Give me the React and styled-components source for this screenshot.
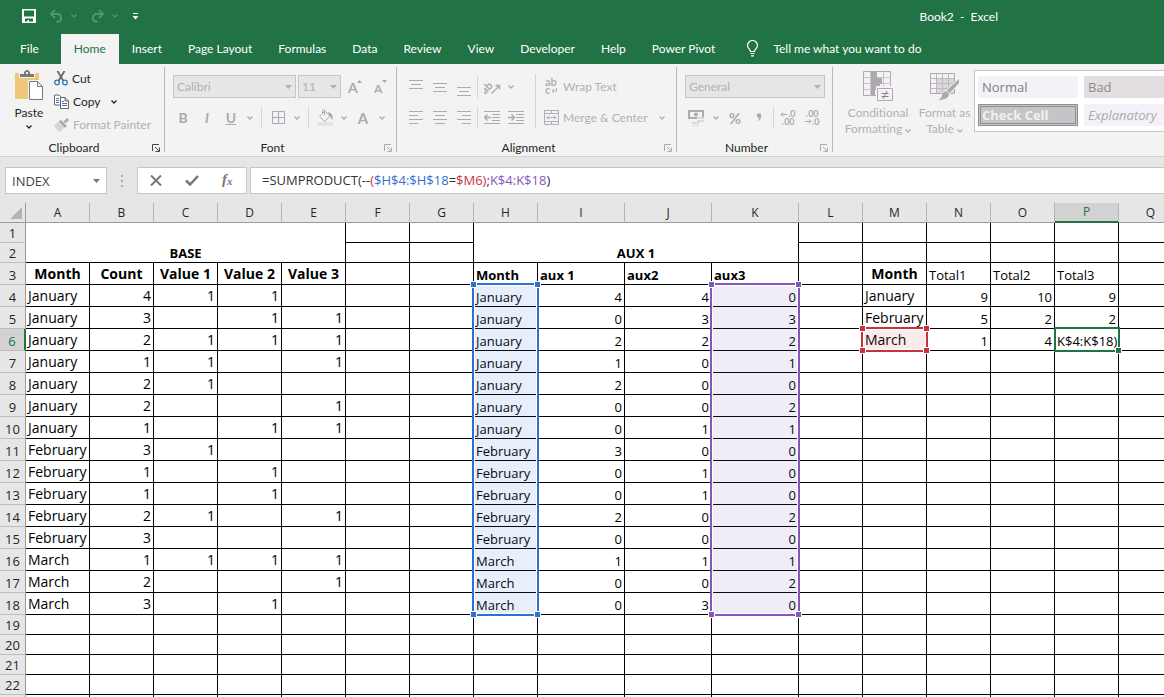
import React from 'react'
import styled, { createGlobalStyle, css } from 'styled-components'

const uiFont = "'Lato', 'Open Sans', sans-serif"
const cellFont = "'Open Sans', 'Noto Sans', sans-serif"

const GlobalStyle = createGlobalStyle`
  * {
    box-sizing: border-box;
  }

  body {
    margin: 0;
    overflow: hidden;
    font-family: ${uiFont};
    font-size: 12px;
    font-variant-ligatures: none;
    color: #262626;
  }

  button, input, select {
    font: inherit;
    color: inherit;
    margin: 0;
  }
`

const Window = styled.div`
  display: flex;
  flex-direction: column;
  height: 100vh;
  background: #e6e6e6;
`

/* title bar and tabs */

const TitleBar = styled.header`
  display: flex;
  align-items: center;
  justify-content: space-between;
  height: 34px;
  padding: 0 166px 2px 22px;
  background: #217346;
  color: #fff;
`

const QuickAccess = styled.div`
  display: flex;
  align-items: center;
  gap: 13px;
`

const Title = styled.span`
  white-space: pre;
`

const IconButton = styled.button`
  display: flex;
  align-items: center;
  justify-content: center;
  gap: 7px;
  flex: none;
  width: ${props => props.$width || 24}px;
  height: 24px;
  padding: 0;
  border: none;
  background: none;
  color: ${props => props.$color || '#ababab'};
`

const Tabs = styled.nav`
  display: flex;
  align-items: stretch;
  height: 30px;
  padding-left: 6px;
  background: #217346;
  color: #fff;
`

const Tab = styled.button`
  display: flex;
  align-items: center;
  padding: 0 13px 2px;
  border: none;
  white-space: nowrap;
  background: ${props => (props.$active ? '#f3f3f3' : 'none')};
  color: ${props => (props.$active ? '#217346' : '#fff')};

  &:first-child {
    padding: 0 22px 2px 14px;
  }
`

const TellMe = styled(Tab)`
  gap: 14px;
  padding-left: 18px;
`

/* ribbon */

const Ribbon = styled.div`
  display: flex;
  flex: none;
  height: 93px;
  padding-top: 3px;
  overflow: hidden;
  background: #f3f3f3;
  border-bottom: 1px solid #d2d2d2;
`

const Group = styled.section`
  display: flex;
  flex-direction: column;
  justify-content: space-between;
  flex: ${props => (props.$width ? `0 0 ${props.$width}px` : '1 0 auto')};
  height: 85px;
  border-right: ${props => (props.$width ? '1px solid #b9b9b9' : 'none')};
`

const GroupFoot = styled.div`
  display: flex;
  align-items: center;
  height: 16px;
  margin-bottom: -4px;
`

const GroupLabel = styled.h2`
  flex: 1;
  margin: 0;
  padding-bottom: 1px;
  font-size: 12px;
  font-weight: 400;
  text-align: center;
`

const Launcher = styled.button`
  display: flex;
  width: 16px;
  padding: 0 4px;
  border: none;
  background: none;
  color: ${props => (props.$active ? '#444' : '#ababab')};
`

const Clipboard = styled.div`
  display: grid;
  grid-template-columns: 38px 1fr;
  padding-left: 10px;
`

const BigButton = styled.button`
  display: flex;
  flex-direction: column;
  align-items: center;
  gap: 4px;
  padding: 3px 0 0;
  border: none;
  background: none;
  line-height: 16px;
  color: ${props => (props.disabled ? '#b1b1b1' : '#262626')};
`

const Stack = styled.div`
  display: flex;
  flex-direction: column;
`

const TextButton = styled.button`
  display: flex;
  align-items: center;
  gap: 4px;
  height: 23px;
  padding: 0 0 0 6px;
  border: none;
  background: none;
  white-space: nowrap;
  color: ${props => (props.disabled ? '#b1b1b1' : '#262626')};

  svg:nth-of-type(2) {
    margin-left: 7px;
  }
`

const Rows = styled.div`
  display: flex;
  flex-direction: column;
  gap: 6px;
  padding: 7px 0 0 ${props => props.$pad || 6}px;
`

const Row = styled.div`
  display: flex;
  align-items: center;
  height: 25px;
`

const Rule = styled.span`
  flex: none;
  width: 1px;
  height: ${props => props.$height || 22}px;
  margin: 0 ${props => props.$gap || 4}px;
  background: #d5d5d5;
`

const SelectWrap = styled.div`
  display: grid;
  align-items: center;
  flex: none;
  width: ${props => props.$width}px;
  height: 23px;
  margin-left: 2px;
  border: 1px solid #c6c6c6;
  background: #e6e6e6;

  select,
  svg {
    grid-area: 1 / 1;
  }

  select {
    width: 100%;
    height: 100%;
    padding: 0 3px;
    border: none;
    background: none;
    appearance: none;
    opacity: 1;
    color: #b1b1b1;
  }

  svg {
    justify-self: end;
    margin-right: 3px;
    color: #b1b1b1;
    pointer-events: none;
  }
`

const Alignment = styled.div`
  display: flex;
`

const Styles = styled.div`
  display: flex;
  align-items: flex-start;
  padding-left: 8px;
`

const StyleButton = styled(BigButton)`
  flex: none;
  width: ${props => props.$width}px;
  gap: 3px;
  padding-top: 4px;
  white-space: nowrap;
`

const Gallery = styled.div`
  display: grid;
  grid-template-columns: repeat(2, 100px);
  grid-auto-rows: 22px;
  gap: 6px;
  flex: none;
  margin-top: 3px;
  padding: 5px 3px;
  border: 1px solid #c6c6c6;
  background: #fff;
`

const Swatch = styled.button`
  padding: 0 4px;
  border: none;
  text-align: left;
  font-family: ${cellFont};
  font-size: 13px;
  line-height: 18px;
  white-space: nowrap;
  background: #f5f1f8;
  color: #808080;

  ${props => props.$kind === 'bad' && css`
    background: #e2dee2;
    color: #8c8c8c;
  `}

  ${props => props.$kind === 'check' && css`
    padding: 0 1px;
    border: 3px double #8e918e;
    line-height: 14px;
    font-weight: 700;
    background: #c6c4c8;
    color: #f0f0f0;
  `}

  ${props => props.$kind === 'note' && css`
    font-style: italic;
    color: #a9a9a9;
  `}
`

/* formula bar */

const FormulaBar = styled.div`
  display: flex;
  flex: none;
  height: 46px;
  padding: 10px 0 9px 5px;
  font-family: ${cellFont};
  font-size: 13px;
`

const NameBox = styled.div`
  display: flex;
  align-items: center;
  width: 102px;
  border: 1px solid #c6c6c6;
  background: #fff;

  input {
    flex: 1;
    min-width: 0;
    padding: 0 0 0 6px;
    border: none;
    color: #444;
  }
`

const Dots = styled.div`
  display: flex;
  align-items: center;
  justify-content: center;
  width: 30px;
`

const FormulaButtons = styled.div`
  display: flex;
  align-items: center;
  justify-content: space-around;
  width: 110px;
  margin-right: 3px;
  border: 1px solid #c6c6c6;
  background: #fff;
`

const FormulaInput = styled.div`
  flex: 1;
  padding-left: 11px;
  border: 1px solid #c6c6c6;
  border-right: none;
  background: #fff;
  line-height: 25px;
  white-space: nowrap;
  color: #333;
  outline: none;
`

const Ref = styled.span`
  color: ${props => props.$color};
`

/* sheet */

const SheetArea = styled.main`
  flex: 1;
  min-height: 0;
  overflow: hidden;
`

const Sheet = styled.table`
  table-layout: fixed;
  width: 1183px;
  border-collapse: separate;
  border-spacing: 0;
  background: #fff;
  font-family: ${cellFont};
  font-size: 13px;
  line-height: 18px;
  color: #000;
`

const SheetRow = styled.tr`
  height: ${props => props.$height}px;
`

const ColHead = styled.th`
  height: 20px;
  padding: 0;
  border-right: 1px solid #b4b4b4;
  border-bottom: ${props => (props.$active ? '2px solid #217346' : '1px solid #9b9b9b')};
  background: ${props => (props.$active ? '#d2d2d2' : '#e6e6e6')};
  color: ${props => (props.$active ? '#217346' : '#262626')};
  font-size: 12px;
  font-weight: 400;
  line-height: 18px;
`

const Corner = styled(ColHead)`
  border-right-color: #9b9b9b;
  line-height: 0;
  vertical-align: bottom;

  svg {
    float: right;
    margin: 0 3px 3px 0;
  }
`

const RowHead = styled.th`
  padding: 0;
  border-right: ${props => (props.$active ? '2px solid #217346' : '1px solid #9b9b9b')};
  border-bottom: 1px solid #bdbdbd;
  background: ${props => (props.$active ? '#d2d2d2' : '#e6e6e6')};
  color: ${props => (props.$active ? '#217346' : '#262626')};
  font-weight: 400;
  vertical-align: bottom;
`

const Cell = styled.td`
  position: ${props => (props.$anchor ? 'relative' : 'static')};
  padding: 0 2px;
  border-right: 1px solid #000;
  border-bottom: 1px solid #000;
  vertical-align: bottom;
  white-space: nowrap;
  text-align: ${props => props.$align || 'left'};
  font-weight: ${props => (props.$bold ? 700 : 400)};

  ${props => props.$large && css`
    font-size: 14px;
    line-height: 20px;
  `}
`

const RangeBox = styled.div`
  position: absolute;
  z-index: 1;
  top: -2px;
  left: -2px;
  right: -2px;
  height: ${props => props.$rows * 22 + 3}px;
  border: 2px solid ${props => props.$color};
  box-shadow: inset 0 0 0 1px #fff;
  background: ${props => props.$fill};
  pointer-events: none;
`

const Handle = styled.i`
  position: absolute;
  width: 7px;
  height: 7px;
  border: 1px solid #fff;
  background: ${props => props.$color};
  ${props => props.$v}: -4px;
  ${props => props.$h}: -4px;
`

const ActiveBox = styled(RangeBox)`
  left: -1px;
  box-shadow: none;
`

const Icon = ({ w, h, children, ...rest }) => (
  <svg width={w} height={h} viewBox={`0 0 ${w} ${h}`} fill="none" stroke="currentColor" aria-hidden="true" {...rest}>
    {children}
  </svg>
)

const Chevron = () => (
  <Icon w={6} h={4} strokeWidth="1.3"><path d="M.5 .5 3 3 5.500 .5" /></Icon>
)

const Triangle = () => (
  <Icon w={7} h={4}><path d="M0 0h7L3.500 4z" fill="currentColor" stroke="none" /></Icon>
)

const Lines = ({ rows, y = 0 }) => (
  <Icon w={16} h={20}>
    {rows.map(([x, len], i) => (
      <path key={i} d={`M${x} ${y + i * 4 + 0.5}h${len}`} />
    ))}
  </Icon>
)

const SaveIcon = () => (
  <Icon w={14} h={14} stroke="none">
    <path fill="#fff" fillRule="evenodd" d="M0 0h14v14H0zM2 1.500v6h10v-6zM3 9.500v3h2.500V11H7v1.500h4v-3z" />
  </Icon>
)

const UndoIcon = ({ flip }) => (
  <Icon w={15} h={14} strokeWidth="2" transform={flip ? 'scale(-1 1)' : undefined}>
    <path d="M6 1 2 5l4 4M2.500 5H9a4 4 0 0 1 0 7.800H7.500" />
  </Icon>
)

const CustomizeIcon = () => (
  <Icon w={7} h={8}><path d="M1 1.500h5" /><path d="M.5 4h6l-3 3.500z" fill="currentColor" stroke="none" /></Icon>
)

const BulbIcon = () => (
  <Icon w={13} h={17} strokeWidth="1.2">
    <path d="M4.500 11.500c0-2.500-3-3-3-6a5 5 0 0 1 10 0c0 3-3 3.500-3 6zM4.500 13.500h4M5 15.800h3" />
  </Icon>
)

const PasteIcon = () => (
  <Icon w={28} h={31} stroke="none">
    <path fill="#eec77b" d="M0 3h24v26H0z" />
    <path fill="#f3f3f3" d="M4 3h16v5H4zM13 10h15v21H13z" />
    <path fill="#787878" fillRule="evenodd" d="M5 7V4h4V2l2-2h2l2 2v2h4v3zM11 2v2h2V2z" />
    <path fill="#fff" stroke="#787878" d="M14.500 11.500h8l5 5v13h-13zM22.500 11.500v5h5" />
  </Icon>
)

const CutIcon = () => (
  <Icon w={14} h={15}>
    <path stroke="#666" strokeWidth="1.800" d="M3.500 0 9.500 10M10.500 0l-6 10" />
    <circle cx="3" cy="11.500" r="2.300" stroke="#3d76b5" strokeWidth="1.300" />
    <circle cx="11" cy="11.500" r="2.300" stroke="#3d76b5" strokeWidth="1.300" />
  </Icon>
)

const CopyIcon = () => (
  <Icon w={15} h={15} stroke="#666">
    <path fill="#fff" d="M.5 1h4.500l2.500 2.500V11h-7z" />
    <path stroke="#3d76b5" d="M2 4.500h3M2 6.500h3M2 8.500h3" />
    <path fill="#fff" d="M6.500 3.500H11l3.500 3.500v7.500h-8zM11 3.500V7h3.500" />
    <path stroke="#3d76b5" d="M8 7.500h2M8 9.500h5M8 11.500h5" />
  </Icon>
)

const PainterIcon = () => (
  <Icon w={15} h={14} stroke="none">
    <path fill="#d9d3d9" d="M0 7l4-3 6 6-4 4C3 12 1 10 0 7z" />
    <path fill="#ababab" d="M4.500 3.500 7 2l6 6-2.500 2zM9.500 3.500 13 0l2 2-3.500 3.500z" />
  </Icon>
)

const LauncherIcon = () => (
  <Icon w={8} h={8}><path d="M.5 7V.5H7M3 3l4 4M7.500 3.500v4h-4" /></Icon>
)

const BordersIcon = () => (
  <Icon w={13} h={13}><path fill="#f6f1f8" d="M.5 .5h12v12H.5zM6.500 .5v12M.5 6.500h12" /></Icon>
)

const FillIcon = () => (
  <Icon w={17} h={17}>
    <path fill="#e6e1e6" stroke="none" d="M0 13h16v4H0z" />
    <path d="M2.500 7.500 8 2l5 5-5.500 5.500zM5.500 5V1.500a1 1 0 0 1 2 0V6" />
    <path fill="currentColor" stroke="none" d="M11 3c4 1 5 3 4.500 8C14 10 14 8 12 6z" />
  </Icon>
)

const GrowFontIcon = ({ shrink }) => (
  <Icon w={14} h={16} stroke="none">
    <text x="0" y="14" fontSize={shrink ? 12 : 14} fontWeight="700" fill="currentColor">A</text>
    <path fill="currentColor" d={shrink ? 'M8 1h5l-2.500 3z' : 'M9 4h5l-2.500-3z'} />
  </Icon>
)

const AngleIcon = () => (
  <Icon w={17} h={16}>
    <text x="-2" y="12" fontSize="11" fontWeight="700" fill="currentColor" stroke="none" transform="rotate(-45 4 10)">ab</text>
    <path strokeWidth="1.300" d="M7.500 14.500 15 7M11.500 6.500H15.500V10.500" />
  </Icon>
)

const IndentIcon = ({ right }) => (
  <Icon w={16} h={14}>
    <path d="M0 .5h16M8 3.500h8M8 6.500h8M8 9.500h8M0 12.500h16" />
    <path strokeWidth="1.500" d={right ? 'M0 6.500h6M3.500 3.500l3 3-3 3' : 'M7 6.500H1M3.500 3.500l-3 3 3 3'} />
  </Icon>
)

const WrapIcon = () => (
  <Icon w={15} h={17} stroke="none">
    <text x="1" y="8" fontSize="11" fontWeight="700" fill="currentColor">ab</text>
    <text x="1" y="16" fontSize="11" fontWeight="700" fill="currentColor">c</text>
    <path stroke="currentColor" d="M12.500 10v3H8M10 11l-2 2 2 2" />
  </Icon>
)

const MergeIcon = () => (
  <Icon w={15} h={15}>
    <path fill="#f6f1f8" d="M.5 .5h14v14H.5zM.5 3.500h14M.5 11.500h14M7.500 .5v3M7.500 11.500v3M3 7.500h9M5 5.500l-2 2 2 2M10 5.500l2 2-2 2" />
  </Icon>
)

const MoneyIcon = () => (
  <Icon w={17} h={16} stroke="none">
    <path fill="#ababab" fillRule="evenodd" d="M0 0h16v9H0zM2 2v5h12V2z" />
    <circle cx="8" cy="4.500" r="2" fill="#ababab" />
    <path fill="#ddd6dd" d="M9 7h7v2H9zM9 10h7v2H9zM4 12h7v2H4zM5 15h6v1H5z" />
  </Icon>
)

const CommaIcon = () => (
  <Icon w={6} h={9} stroke="none">
    <circle cx="3" cy="2.500" r="2.300" fill="currentColor" />
    <path fill="currentColor" d="M5.300 2.500C5.300 5.500 4 7.500 1 8.500 2.500 7 3 6 3 4z" />
  </Icon>
)

const DecimalIcon = ({ less }) => (
  <Icon w={16} h={16} stroke="none">
    <text x={less ? 2 : 8} y="7" fontSize="9" fontWeight="700" fill="currentColor">{less ? '.00' : '.0'}</text>
    <text x={less ? 8 : 2} y="15" fontSize="9" fontWeight="700" fill="currentColor">{less ? '.0' : '.00'}</text>
    <path stroke="currentColor" d={less ? 'M1 11.500h6M5 9.500l2 2-2 2' : 'M7 4.500H1M3 2.500l-2 2 2 2'} />
  </Icon>
)

const ConditionalIcon = () => (
  <Icon w={30} h={31} stroke="#ababab">
    <path fill="#f6f1f8" d="M.5 .5h27v24H.5z" />
    <path stroke="#ccc6cc" d="M7.500 0v25M20.500 0v25M0 6.500h28M0 12.500h28M0 18.500h28" />
    <path fill="#ababab" stroke="none" d="M8 1h6v6h5v6h-2v6h-5v5H8z" />
    <path fill="#f6f1f8" stroke="#f3f3f3" d="M13.500 15.500h16v15h-16z" />
    <path fill="#f6f1f8" d="M14.500 17.500h15v12h-15z" />
    <path stroke="#858585" d="M18.500 22.500h7M18.500 25.500h7M24 20l-4 8" />
  </Icon>
)

const TableIcon = () => (
  <Icon w={30} h={31} stroke="#ababab">
    <path fill="#f6f1f8" d="M.5 2.500h24v20H.5z" />
    <path fill="#ddd6dd" stroke="none" d="M7 8h17v14H7z" />
    <path stroke="#bdb8bd" d="M6.500 2v20M12.500 2v20M18.500 2v20M0 7.500h24M0 12.500h24M0 17.500h24" />
    <path fill="#ababab" stroke="#f3f3f3" d="M29.500 7v5L19.500 23l-3.500-3.500z" />
    <path fill="#ababab" stroke="#f3f3f3" d="M15.500 20c3 0 4.500 2 3.500 5-2 4-8 4.500-12 4.500 3-1 4-3 4.500-5.500.5-2.500 2-4 4-4z" />
  </Icon>
)

const CancelIcon = () => (
  <Icon w={12} h={11} strokeWidth="2"><path d="M1 .5l10 10M11 .5 1 10.500" /></Icon>
)

const EnterIcon = () => (
  <Icon w={14} h={11} strokeWidth="2.500"><path d="M1 5.500 5 9.500 13 1" /></Icon>
)

const FunctionIcon = () => (
  <Icon w={14} h={15} stroke="none">
    <text x="1" y="11" fontFamily="Liberation Serif, serif" fontStyle="italic" fontWeight="700" fontSize="15" fill="currentColor">f</text>
    <text x="6" y="12" fontFamily="Liberation Serif, serif" fontStyle="italic" fontWeight="700" fontSize="11" fill="currentColor">x</text>
  </Icon>
)

const tabs = ['File', 'Home', 'Insert', 'Page Layout', 'Formulas', 'Data', 'Review', 'View', 'Developer', 'Help', 'Power Pivot']

const columns = 'ABCDEFGHIJKLMNOPQ'.split('')
const wideColumns = ['I', 'J', 'K']

// Month, Count, Value 1..3 and the three helper columns
const records = [
  ['January', 4, 1, 1, '', 4, 4, 0],
  ['January', 3, '', 1, 1, 0, 3, 3],
  ['January', 2, 1, 1, 1, 2, 2, 2],
  ['January', 1, 1, '', 1, 1, 0, 1],
  ['January', 2, 1, '', '', 2, 0, 0],
  ['January', 2, '', '', 1, 0, 0, 2],
  ['January', 1, '', 1, 1, 0, 1, 1],
  ['February', 3, 1, '', '', 3, 0, 0],
  ['February', 1, '', 1, '', 0, 1, 0],
  ['February', 1, '', 1, '', 0, 1, 0],
  ['February', 2, 1, '', 1, 2, 0, 2],
  ['February', 3, '', '', '', 0, 0, 0],
  ['March', 1, 1, 1, 1, 1, 1, 1],
  ['March', 2, '', '', 1, 0, 0, 2],
  ['March', 3, '', 1, '', 0, 3, 0],
]

const totals = [
  ['January', 9, 10, 9],
  ['February', 5, 2, 2],
  ['March', 1, 4, 'K$4:K$18)'],
]

const cells = {
  A3: 'Month', B3: 'Count', C3: 'Value 1', D3: 'Value 2', E3: 'Value 3',
  H3: 'Month', I3: 'aux 1', J3: 'aux2', K3: 'aux3',
  M3: 'Month', N3: 'Total1', O3: 'Total2', P3: 'Total3',
}

records.forEach(([month, count, v1, v2, v3, a1, a2, a3], i) => {
  const values = { A: month, B: count, C: v1, D: v2, E: v3, H: month, I: a1, J: a2, K: a3 }
  Object.entries(values).forEach(([col, value]) => {
    cells[col + (i + 4)] = value
  })
})

totals.forEach((row, i) => {
  row.forEach((value, j) => {
    cells['MNOP'[j] + (i + 4)] = value
  })
})

const ranges = {
  H4: { color: '#2f6fcf', fill: 'rgba(47, 111, 207, 0.11)', rows: 15 },
  K4: { color: '#8457bb', fill: 'rgba(132, 87, 187, 0.11)', rows: 15 },
  M6: { color: '#c5343c', fill: 'rgba(197, 52, 60, 0.1)', rows: 1 },
}

const Range = ({ color, fill, rows }) => (
  <RangeBox $color={color} $fill={fill} $rows={rows}>
    <Handle $color={color} $v="top" $h="left" />
    <Handle $color={color} $v="top" $h="right" />
    <Handle $color={color} $v="bottom" $h="left" />
    <Handle $color={color} $v="bottom" $h="right" />
  </RangeBox>
)

const SheetCell = ({ col, row }) => {
  const id = col + row
  const value = cells[id]
  const large = 'ABCDEM'.includes(col) && row > 2 && row < 19
  const heading = row === 3
  const active = id === 'P6'
  let align = typeof value === 'number' ? 'right' : 'left'
  if (heading && large) align = 'center'

  return (
    <Cell
      $large={large}
      $align={align}
      $bold={heading && !'NOP'.includes(col)}
      $anchor={active || Boolean(ranges[id])}
    >
      {value}
      {ranges[id] && <Range {...ranges[id]} />}
      {active && (
        <ActiveBox $color="#217346" $fill="none" $rows={1}>
          <Handle $color="#217346" $v="bottom" $h="right" />
        </ActiveBox>
      )}
    </Cell>
  )
}

const renderCells = row => {
  if (row === 1) {
    return (
      <>
        <Cell colSpan={5} rowSpan={2} $align="center" $bold>BASE</Cell>
        <Cell /><Cell />
        <Cell colSpan={4} rowSpan={2} $align="center" $bold>AUX 1</Cell>
        {columns.slice(11).map(col => <Cell key={col} />)}
      </>
    )
  }
  const visible = row === 2 ? columns.filter(col => !'ABCDEHIJK'.includes(col)) : columns
  return visible.map(col => <SheetCell key={col} col={col} row={row} />)
}

const Foot = ({ label, active }) => (
  <GroupFoot>
    <GroupLabel>{label}</GroupLabel>
    <Launcher $active={active} aria-label={`${label} settings`}><LauncherIcon /></Launcher>
  </GroupFoot>
)

const ChevronButton = ({ label, width = 14 }) => (
  <IconButton disabled $width={width} aria-label={label}><Chevron /></IconButton>
)

const Glyph = styled.span`
  font-size: ${props => props.$size || 14}px;
  font-weight: 700;
  font-style: ${props => (props.$italic ? 'italic' : 'normal')};
  text-decoration: ${props => (props.$underline ? 'underline' : 'none')};
`

const App = () => (
  <Window>
    <GlobalStyle />
    <TitleBar>
      <QuickAccess>
        <IconButton $width={14} aria-label="Save"><SaveIcon /></IconButton>
        <IconButton $width={28} $color="#4f9570" aria-label="Undo"><UndoIcon /><Chevron /></IconButton>
        <IconButton $width={28} $color="#4f9570" aria-label="Redo"><UndoIcon flip /><Chevron /></IconButton>
        <IconButton $width={8} $color="#fff" aria-label="Customize toolbar"><CustomizeIcon /></IconButton>
      </QuickAccess>
      <Title>Book2  -  Excel</Title>
    </TitleBar>
    <Tabs>
      {tabs.map(tab => <Tab key={tab} $active={tab === 'Home'}>{tab}</Tab>)}
      <TellMe><BulbIcon /> Tell me what you want to do</TellMe>
    </Tabs>

    <Ribbon>
      <Group $width={165}>
        <Clipboard>
          <BigButton><PasteIcon />Paste<Chevron /></BigButton>
          <Stack>
            <TextButton><CutIcon />Cut</TextButton>
            <TextButton><CopyIcon />Copy<Chevron /></TextButton>
            <TextButton disabled><PainterIcon />Format Painter</TextButton>
          </Stack>
        </Clipboard>
        <Foot label="Clipboard" active />
      </Group>

      <Group $width={232}>
        <Rows>
          <Row>
            <SelectWrap $width={123}>
              <select disabled aria-label="Font"><option>Calibri</option></select>
              <Triangle />
            </SelectWrap>
            <SelectWrap $width={43}>
              <select disabled aria-label="Font size"><option>11</option></select>
              <Triangle />
            </SelectWrap>
            <IconButton disabled $width={28} aria-label="Increase font size"><GrowFontIcon /></IconButton>
            <IconButton disabled aria-label="Decrease font size"><GrowFontIcon shrink /></IconButton>
          </Row>
          <Row>
            <IconButton disabled aria-label="Bold"><Glyph>B</Glyph></IconButton>
            <IconButton disabled aria-label="Italic"><Glyph $italic>I</Glyph></IconButton>
            <IconButton disabled aria-label="Underline"><Glyph $underline>U</Glyph></IconButton>
            <ChevronButton label="Underline options" />
            <Rule />
            <IconButton disabled aria-label="Borders"><BordersIcon /></IconButton>
            <ChevronButton label="Border options" />
            <Rule />
            <IconButton disabled aria-label="Fill color"><FillIcon /></IconButton>
            <ChevronButton label="Fill color options" />
            <IconButton disabled aria-label="Font color"><Glyph $size={15}>A</Glyph></IconButton>
            <ChevronButton label="Font color options" />
          </Row>
        </Rows>
        <Foot label="Font" />
      </Group>

      <Group $width={280}>
        <Alignment>
          <Rows>
            <Row>
              <IconButton disabled aria-label="Top align"><Lines y={3} rows={[[2, 14], [4, 10], [2, 14]]} /></IconButton>
              <IconButton disabled aria-label="Middle align"><Lines y={6} rows={[[2, 14], [4, 10], [2, 14]]} /></IconButton>
              <IconButton disabled aria-label="Bottom align"><Lines y={10} rows={[[2, 14], [4, 10], [2, 14]]} /></IconButton>
              <Rule $gap={2} />
              <IconButton disabled aria-label="Orientation"><AngleIcon /></IconButton>
              <ChevronButton label="Orientation options" />
            </Row>
            <Row>
              <IconButton disabled aria-label="Align left"><Lines y={3} rows={[[2, 14], [2, 9], [2, 14], [2, 9]]} /></IconButton>
              <IconButton disabled aria-label="Center"><Lines y={3} rows={[[2, 14], [4, 10], [2, 14], [4, 10]]} /></IconButton>
              <IconButton disabled aria-label="Align right"><Lines y={3} rows={[[2, 14], [7, 9], [2, 14], [7, 9]]} /></IconButton>
              <Rule $gap={2} />
              <IconButton disabled aria-label="Decrease indent"><IndentIcon /></IconButton>
              <IconButton disabled aria-label="Increase indent"><IndentIcon right /></IconButton>
            </Row>
          </Rows>
          <Rows>
            <Rule $height={54} $gap={1} />
          </Rows>
          <Rows $pad={1}>
            <Row><TextButton disabled><WrapIcon />Wrap Text</TextButton></Row>
            <Row><TextButton disabled><MergeIcon />Merge &amp; Center<Chevron /></TextButton></Row>
          </Rows>
        </Alignment>
        <Foot label="Alignment" />
      </Group>

      <Group $width={156}>
        <Rows>
          <Row>
            <SelectWrap $width={140}>
              <select disabled aria-label="Number format"><option>General</option></select>
              <Triangle />
            </SelectWrap>
          </Row>
          <Row>
            <IconButton disabled $width={26} aria-label="Accounting format"><MoneyIcon /></IconButton>
            <ChevronButton label="Accounting options" />
            <IconButton disabled aria-label="Percent style"><Glyph $size={15}>%</Glyph></IconButton>
            <IconButton disabled aria-label="Comma style"><CommaIcon /></IconButton>
            <Rule $gap={2} />
            <IconButton disabled aria-label="Increase decimal"><DecimalIcon /></IconButton>
            <IconButton disabled aria-label="Decrease decimal"><DecimalIcon less /></IconButton>
          </Row>
        </Rows>
        <Foot label="Number" />
      </Group>

      <Group>
        <Styles>
          <StyleButton disabled $width={74}>
            <ConditionalIcon />
            <span>Conditional<br />Formatting <Chevron /></span>
          </StyleButton>
          <StyleButton disabled $width={59}>
            <TableIcon />
            <span>Format as<br />Table <Chevron /></span>
          </StyleButton>
          <Gallery>
            <Swatch>Normal</Swatch>
            <Swatch $kind="bad">Bad</Swatch>
            <Swatch $kind="check">Check Cell</Swatch>
            <Swatch $kind="note">Explanatory</Swatch>
          </Gallery>
        </Styles>
      </Group>
    </Ribbon>

    <FormulaBar>
      <NameBox>
        <input aria-label="Name box" defaultValue="INDEX" />
        <IconButton $width={20} $color="#777" aria-label="Show names"><Triangle /></IconButton>
      </NameBox>
      <Dots>
        <Icon w={2} h={12}><path d="M1 0v12" stroke="#ababab" strokeWidth="2" strokeDasharray="2 3" /></Icon>
      </Dots>
      <FormulaButtons>
        <IconButton $color="#777" aria-label="Cancel"><CancelIcon /></IconButton>
        <IconButton $color="#777" aria-label="Enter"><EnterIcon /></IconButton>
        <IconButton $color="#777" aria-label="Insert function"><FunctionIcon /></IconButton>
      </FormulaButtons>
      <FormulaInput role="textbox" aria-label="Formula" contentEditable suppressContentEditableWarning spellCheck={false}>
        =SUMPRODUCT(--<Ref $color="#d13438">(</Ref><Ref $color="#2f6fcf">$H$4:$H$18</Ref>=<Ref $color="#c5343c">$M6)</Ref>;<Ref $color="#8457bb">K$4:K$18</Ref>)
      </FormulaInput>
    </FormulaBar>

    <SheetArea>
      <Sheet>
        <colgroup>
          <col width="26" />
          {columns.map(col => <col key={col} width={wideColumns.includes(col) ? 87 : 64} />)}
        </colgroup>
        <thead>
          <tr>
            <Corner aria-label="Select all">
              <Icon w={12} h={12}><path d="M12 0v12H0z" fill="#b4b4b4" stroke="none" /></Icon>
            </Corner>
            {columns.map(col => <ColHead key={col} scope="col" $active={col === 'P'}>{col}</ColHead>)}
          </tr>
        </thead>
        <tbody>
          {Array.from({ length: 23 }, (_, i) => i + 1).map(row => (
            <SheetRow key={row} $height={row > 2 && row < 19 ? 22 : 20}>
              <RowHead scope="row" $active={row === 6}>{row}</RowHead>
              {renderCells(row)}
            </SheetRow>
          ))}
        </tbody>
      </Sheet>
    </SheetArea>
  </Window>
)

export default App
